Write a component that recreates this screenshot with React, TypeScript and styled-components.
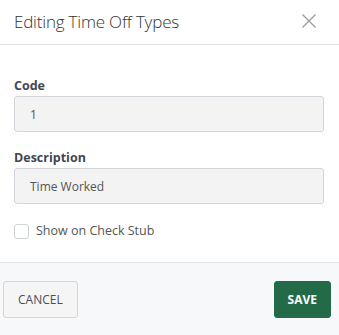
import styled, { createGlobalStyle } from "styled-components";

const GlobalStyle = createGlobalStyle`
  html, body {
    margin: 0;
    padding: 0;
    background: #ffffff;
    font-family: "Open Sans", "Noto Sans", sans-serif;
  }
`;

const Modal = styled.div`
  width: 339px;
  height: 335px;
  display: flex;
  flex-direction: column;
  background: #fff;
  overflow: hidden;
`;

const Header = styled.div`
  height: 45px;
  box-sizing: border-box;
  display: flex;
  align-items: center;
  justify-content: space-between;
  padding: 0 22px 2px 14px;
  border-bottom: 1px solid #e1e1e1;
`;

const Title = styled.h2`
  margin: 0;
  font-size: 17px;
  font-weight: 300;
  color: #333;
  letter-spacing: -0.2px;
`;

const CloseButton = styled.button`
  border: none;
  background: none;
  padding: 0;
  width: 16px;
  height: 16px;
  display: flex;
  cursor: pointer;
`;

const Body = styled.div`
  flex: 1;
  padding: 33px 15px 0 14px;
  display: flex;
  flex-direction: column;
`;

const Field = styled.div`
  display: flex;
  flex-direction: column;
  margin-bottom: 18px;
`;

const Label = styled.label`
  font-size: 12.5px;
  font-weight: 700;
  color: #3f4751;
  margin-bottom: 2px;
  line-height: 16px;
`;

const Input = styled.input`
  box-sizing: border-box;
  height: 36px;
  width: 100%;
  border: 1px solid #d3d6da;
  border-radius: 3px;
  background: #f3f3f3;
  padding: 0 15px;
  font-family: inherit;
  font-size: 12px;
  color: #555;
  outline: none;
`;

const CheckRow = styled.label`
  display: flex;
  align-items: center;
  gap: 7px;
  line-height: 18px;
  font-size: 12.5px;
  color: #555;
`;

const Box = styled.span`
  width: 13px;
  height: 13px;
  border: 1px solid #cfd3d8;
  border-radius: 3px;
  background: #fff;
`;

const Footer = styled.div`
  height: 73px;
  box-sizing: border-box;
  background: #f7f8fa;
  border-top: 1px solid #e1e4e8;
  display: flex;
  align-items: center;
  justify-content: space-between;
  padding: 0 8px 0 3px;
`;

const Button = styled.button<{ $primary?: boolean }>`
  height: 37px;
  box-sizing: border-box;
  padding: 0 ${(p) => (p.$primary ? "13px" : "14px")};
  border-radius: 3px;
  font-family: inherit;
  font-size: 12px;
  font-weight: ${(p) => (p.$primary ? 700 : 400)};
  color: ${(p) => (p.$primary ? "#fff" : "#4a4f55")};
  background: ${(p) => (p.$primary ? "#236a48" : "#f5f5f5")};
  border: 1px solid ${(p) => (p.$primary ? "#236a48" : "#d3d6da")};
  cursor: pointer;
`;

const App = () => {
  return (
    <Modal>
      <GlobalStyle />
      <Header>
        <Title>Editing Time Off Types</Title>
        <CloseButton aria-label="Close">
          <svg width="16" height="16" viewBox="0 0 16 16">
            <path d="M1.5 1.5 L14.5 14.5 M14.5 1.5 L1.5 14.5" stroke="#9a9a9a" strokeWidth="1.3" />
          </svg>
        </CloseButton>
      </Header>
      <Body>
        <Field>
          <Label>Code</Label>
          <Input defaultValue="1" />
        </Field>
        <Field>
          <Label>Description</Label>
          <Input defaultValue="Time Worked" />
        </Field>
        <CheckRow>
          <Box />
          Show on Check Stub
        </CheckRow>
      </Body>
      <Footer>
        <Button>CANCEL</Button>
        <Button $primary>SAVE</Button>
      </Footer>
    </Modal>
  );
};

export default App;
